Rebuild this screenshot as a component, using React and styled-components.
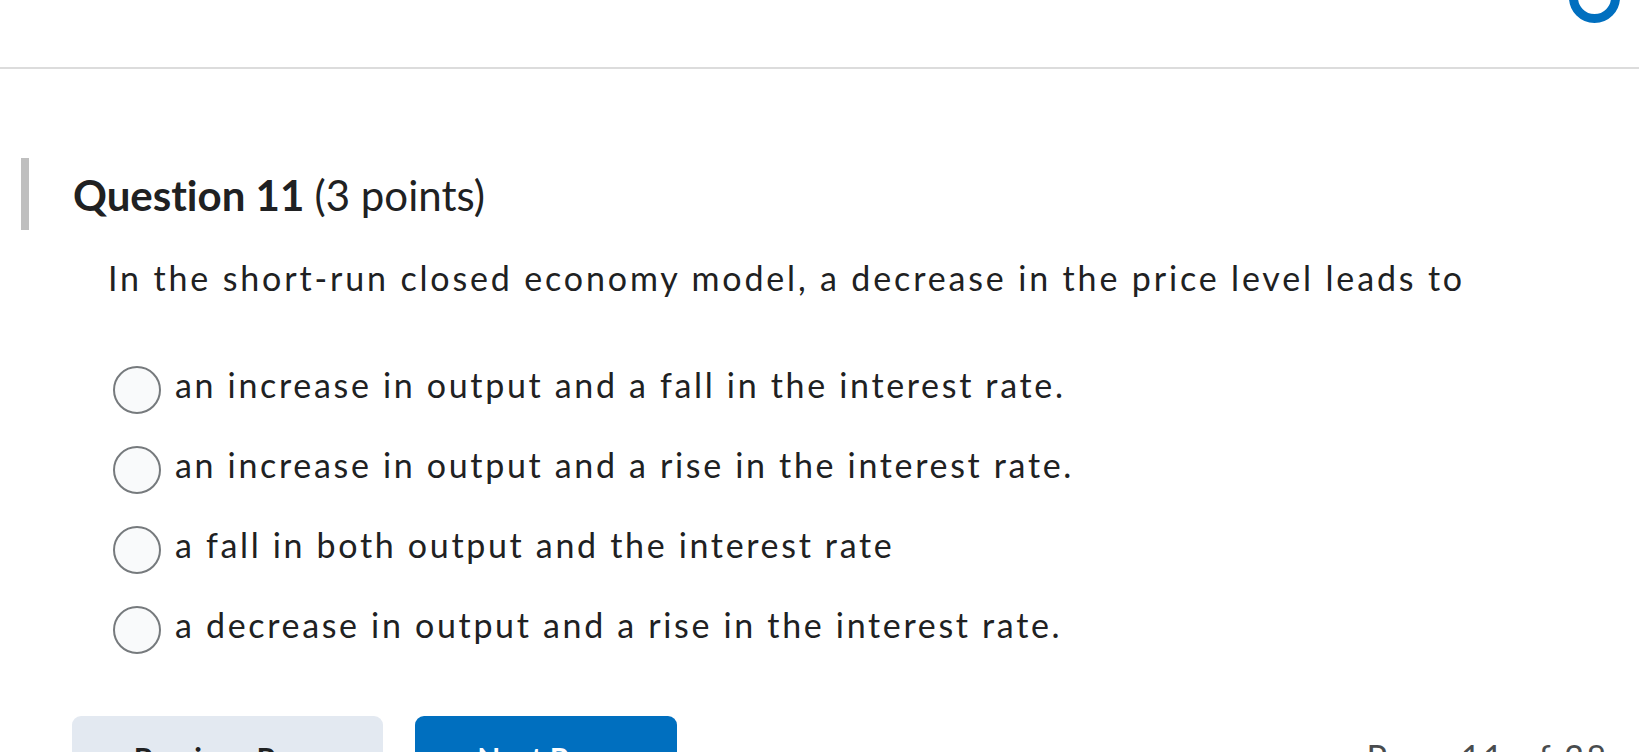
import React from "react";
import styled, { createGlobalStyle } from "styled-components";

const Global = createGlobalStyle`
  html, body { margin: 0; padding: 0; background: #ffffff; }
  body { font-family: Lato, "Noto Sans", sans-serif; color: #202122; overflow: hidden; font-variant-ligatures: none; }
  * { box-sizing: border-box; }
`;

const Page = styled.div`
  width: 1639px;
  height: 752px;
  overflow: hidden;
  display: flex;
  flex-direction: column;
`;

const Header = styled.header`
  height: 69px;
  flex: none;
  border-bottom: 2px solid #dcdcdc;
  display: flex;
  justify-content: flex-end;
  align-items: flex-start;
  overflow: hidden;
  padding-right: 19px;
`;

const Spinner = styled.div`
  width: 51px;
  height: 51px;
  margin-top: -28px;
  border-radius: 50%;
  border: 9px solid #006fbf;
`;

const QuestionTitle = styled.h2`
  margin: 89px 0 0 21px;
  height: 72px;
  padding: 3px 0 0 44px;
  border-left: 8px solid #bfbfbf;
  font-size: 42px;
  line-height: 69px;
  font-weight: 700;
  color: #202122;
  white-space: nowrap;
  font-variant-ligatures: none;
`;

const Points = styled.span`
  font-weight: 400;
`;

const Prompt = styled.p`
  margin: 27px 0 0 108px;
  font-size: 34px;
  line-height: 41px;
  letter-spacing: 2.85px;
  color: #202122;
  white-space: nowrap;
`;

const Options = styled.div`
  margin: 52px 0 0 113px;
  display: flex;
  flex-direction: column;
`;

const Option = styled.label`
  height: 80px;
  display: flex;
  align-items: center;
  gap: 14px;
  cursor: pointer;
`;

const Radio = styled.span`
  width: 48px;
  height: 48px;
  flex: none;
  border-radius: 50%;
  border: 2px solid #767a7d;
  background: #f9fafb;
`;

const OptionText = styled.span`
  font-size: 34px;
  line-height: 41px;
  letter-spacing: 2.67px;
  margin-bottom: 12px;
  color: #202122;
  white-space: nowrap;
`;

const Footer = styled.div`
  margin: 46px 0 0 72px;
  display: flex;
  align-items: flex-start;
`;

const Button = styled.button`
  height: 84px;
  border: none;
  border-radius: 9px;
  font-family: Lato, "Noto Sans", sans-serif;
  font-size: 30px;
  font-weight: 700;
  padding: 0;
  margin-right: ${(p) => p.$gap || 0}px;
  width: ${(p) => p.$w}px;
  background: ${(p) => (p.$primary ? "#006fbf" : "#e3e9f1")};
  color: ${(p) => (p.$primary ? "#ffffff" : "#202122")};
`;

const PageCount = styled.div`
  margin-left: auto;
  margin-right: 30px;
  margin-top: 20px;
  font-size: 34px;
  line-height: 41px;
  letter-spacing: 2.7px;
  color: #494c4e;
  white-space: nowrap;
`;

const options = [
  "an increase in output and a fall in the interest rate.",
  "an increase in output and a rise in the interest rate.",
  "a fall in both output and the interest rate",
  "a decrease in output and a rise in the interest rate.",
];

export default function App() {
  return (
    <>
      <Global />
      <Page>
        <Header>
          <Spinner />
        </Header>
        <QuestionTitle>
          Question 11 <Points>(3 points)</Points>
        </QuestionTitle>
        <Prompt>
          In the short-run closed economy model, a decrease in the price level leads to
        </Prompt>
        <Options>
          {options.map((o) => (
            <Option key={o}>
              <Radio />
              <OptionText>{o}</OptionText>
            </Option>
          ))}
        </Options>
        <Footer>
          <Button $w={311} $gap={32}>Previous Page</Button>
          <Button $w={262} $primary>Next Page</Button>
          <PageCount>Page 11 of 28</PageCount>
        </Footer>
      </Page>
    </>
  );
}
